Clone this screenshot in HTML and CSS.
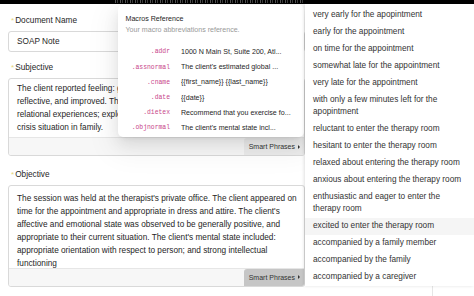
FILE: index.html
```html
<!DOCTYPE html>
<html lang="en">
<head>
<meta charset="utf-8">
<title>Session Note</title>
<link rel="stylesheet" href="styles.css">
</head>
<body>
<div class="topbar"><div class="topbar-noise"></div></div>
<div class="page">
  <div class="form">
    <div class="item">
      <div class="label"><span class="req">*</span>Document Name</div>
      <div class="input">SOAP Note</div>
    </div>
    <div class="item area">
      <div class="label"><span class="req">*</span>Subjective</div>
      <div class="field">
        <div class="text">The client reported feeling: grounded, hopeful, calm and more<br>reflective, and improved. The client discussed recent<br>relational experiences; exploring how they coped with a<br>crisis situation in family.</div>
        <div class="field-foot"><span class="sp-btn">Smart Phrases <span class="caret"></span></span></div>
      </div>
    </div>
    <div class="item area">
      <div class="label"><span class="req">*</span>Objective</div>
      <div class="field">
        <div class="text tall">The session was held at the therapist's private office. The client appeared on<br>time for the appointment and appropriate in dress and attire. The client's<br>affective and emotional state was observed to be generally positive, and<br>appropriate to their current situation. The client's mental state included:<br>appropriate orientation with respect to person; and strong intellectual<br>functioning</div>
        <div class="field-foot"><span class="sp-btn hover">Smart Phrases <span class="caret"></span></span></div>
      </div>
    </div>
  </div>
  <div class="side">
    <div class="side-spacer"></div>
    <div class="side-grid"><div class="cell"></div><div class="cell"></div></div>
  </div>

  <div class="macros">
    <div class="macros-title">Macros Reference</div>
    <div class="macros-sub">Your macro abbreviations reference.</div>
    <div class="macro-rows">
      <code class="code">.addr</code><span class="desc">1000 N Main St, Suite 200, Atl...</span>
      <code class="code">.assnormal</code><span class="desc">The client's estimated global ...</span>
      <code class="code">.cname</code><span class="desc">{{first_name}} {{last_name}}</span>
      <code class="code">.date</code><span class="desc">{{date}}</span>
      <code class="code">.dietex</code><span class="desc">Recommend that you exercise fo...</span>
      <code class="code">.objnormal</code><span class="desc">The client's mental state incl...</span>
    </div>
  </div>

  <ul class="phrases">
    <li>very early for the apopintment</li>
    <li>early for the appointment</li>
    <li>on time for the appointment</li>
    <li>somewhat late for the appointment</li>
    <li>very late for the appointment</li>
    <li>with only a few minutes left for the apopintment</li>
    <li>reluctant to enter the therapy room</li>
    <li>hesitant to enter the therapy room</li>
    <li>relaxed about entering the therapy room</li>
    <li>anxious about entering the therapy room</li>
    <li>enthusiastic and eager to enter the therapy room</li>
    <li class="active">excited to enter the therapy room</li>
    <li>accompanied by a family member</li>
    <li>accompanied by the family</li>
    <li>accompanied by a caregiver</li>
  </ul>
</div>
</body>
</html>
```

FILE: styles.css
```css
* { box-sizing: border-box; }

html, body {
  margin: 0;
  padding: 0;
  width: 474px;
  height: 296px;
  overflow: hidden;
  background: #fff;
  font-family: "Liberation Sans", Arial, sans-serif;
  color: #262626;
}

.topbar {
  height: 4px;
  background: #000;
  overflow: hidden;
}

.topbar-noise {
  margin-left: 115px;
  width: 190px;
  height: 3px;
  opacity: .55;
  background:
    repeating-linear-gradient(90deg, #9a9a9a 0 1px, transparent 1px 2px, #6d6d6d 2px 3px, transparent 3px 5px);
}

.page {
  position: relative;
  display: flex;
  height: 292px;
}

.form {
  width: 305px;
  flex: none;
  padding: 10.2px 0 0 8px;
}

.item { margin-bottom: 9.5px; }
.item.area { margin-bottom: 11.5px; }

.label {
  display: flex;
  align-items: center;
  height: 13px;
  line-height: 13px;
  margin-bottom: 4px;
  font-size: 8.25px;
  color: #262626;
}

.req {
  color: #e6d57a;
  font-size: 8px;
  margin-left: 3px;
  margin-right: 1px;
}

.input {
  height: 20.8px;
  border: 1px solid #d9d9d9;
  border-radius: 3px;
  padding: 0 8px;
  display: flex;
  align-items: center;
  font-size: 8.25px;
  color: #262626;
}

.field {
  border: 1px solid #d9d9d9;
  border-radius: 3px;
  overflow: hidden;
}

.text {
  padding: 3px 8px;
  font-size: 8.25px;
  line-height: 13px;
  white-space: nowrap;
  overflow: hidden;
  color: #262626;
}

.text.tall {
  height: 82px;
  padding-top: 6px;
}

.field-foot {
  height: 18px;
  border-top: 1px solid #e6e6e6;
  background: #f7f7f7;
  display: flex;
  justify-content: flex-end;
}

.sp-btn {
  display: flex;
  align-items: center;
  gap: 3px;
  padding: 0 4px 0 5px;
  font-size: 7px;
  color: #333;
  background: #ececec;
  border-top-left-radius: 3px;
}

.sp-btn.hover { background: #c6c6c6; }

.caret {
  width: 0;
  height: 0;
  border-left: 2.5px solid #333;
  border-top: 2px solid transparent;
  border-bottom: 2px solid transparent;
}

.side {
  flex: 1;
  display: flex;
  flex-direction: column;
}

.side-spacer { height: 281px; flex: none; }

.side-grid {
  flex: 1;
  border-top: 1px solid #e6e6e6;
  display: grid;
  grid-template-columns: 128px 1fr;
}

.side-grid .cell:first-child { border-right: 1px solid #e6e6e6; }

.macros {
  position: absolute;
  left: 118px;
  top: 1px;
  width: 186px;
  height: 132px;
  background: #fff;
  border-radius: 5px;
  padding: 9px 7.5px 0;
  box-shadow: 0 3px 6px -4px rgba(0,0,0,.14), 0 6px 16px 0 rgba(0,0,0,.09), 0 9px 28px 8px rgba(0,0,0,.05);
}

.macros-title {
  font-size: 7.1px;
  line-height: 10px;
  color: #262626;
}

.macros-sub {
  margin-top: 1px;
  font-size: 7.1px;
  line-height: 10px;
  color: #999;
}

.macro-rows {
  margin-top: 9.4px;
  display: grid;
  grid-template-columns: 44.5px 1fr;
  column-gap: 11px;
  grid-auto-rows: 15.2px;
  align-items: center;
}

.code {
  text-align: right;
  font-family: "Liberation Mono", monospace;
  font-size: 6.4px;
  color: #c8468a;
  white-space: nowrap;
}

.desc {
  font-size: 7.1px;
  color: #262626;
  white-space: nowrap;
  overflow: hidden;
}

.phrases {
  position: absolute;
  left: 305px;
  top: 0;
  width: 169px;
  height: 281.5px;
  margin: 0;
  padding: 2.5px 0;
  list-style: none;
  background: #fff;
  box-shadow: -1px 0 3px rgba(0,0,0,.12);
}

.phrases li {
  padding: 2.5px 12px 2.5px 8px;
  font-size: 8.25px;
  line-height: 12px;
  color: #333;
}

.phrases li.active { background: #f5f5f5; }
```
